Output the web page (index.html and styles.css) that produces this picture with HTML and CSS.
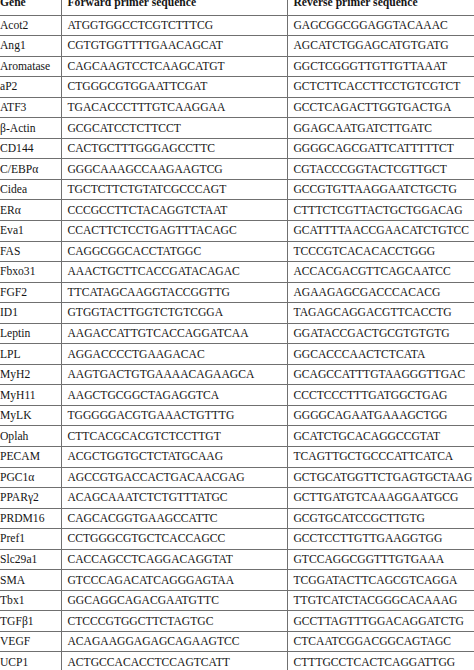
FILE: index.html
```html
<!DOCTYPE html>
<html>
<head>
<meta charset="utf-8">
<link rel="stylesheet" href="styles.css">
</head>
<body>
<table class="primers">
<thead>
<tr><th class="c-gene">Gene</th><th class="c-fwd">Forward primer sequence</th><th class="c-rev">Reverse primer sequence</th></tr>
</thead>
<tbody>
<tr><td>Acot2</td><td>ATGGTGGCCTCGTCTTTCG</td><td>GAGCGGCGGAGGTACAAAC</td></tr>
<tr><td>Ang1</td><td>CGTGTGGTTTTGAACAGCAT</td><td>AGCATCTGGAGCATGTGATG</td></tr>
<tr><td>Aromatase</td><td>CAGCAAGTCCTCAAGCATGT</td><td>GGCTCGGGTTGTTGTTAAAT</td></tr>
<tr><td>aP2</td><td>CTGGGCGTGGAATTCGAT</td><td>GCTCTTCACCTTCCTGTCGTCT</td></tr>
<tr><td>ATF3</td><td>TGACACCCTTTGTCAAGGAA</td><td>GCCTCAGACTTGGTGACTGA</td></tr>
<tr><td>β-Actin</td><td>GCGCATCCTCTTCCT</td><td>GGAGCAATGATCTTGATC</td></tr>
<tr><td>CD144</td><td>CACTGCTTTGGGAGCCTTC</td><td>GGGGCAGCGATTCATTTTTCT</td></tr>
<tr><td>C/EBPα</td><td>GGGCAAAGCCAAGAAGTCG</td><td>CGTACCCGGTACTCGTTGCT</td></tr>
<tr><td>Cidea</td><td>TGCTCTTCTGTATCGCCCAGT</td><td>GCCGTGTTAAGGAATCTGCTG</td></tr>
<tr><td>ERα</td><td>CCCGCCTTCTACAGGTCTAAT</td><td>CTTTCTCGTTACTGCTGGACAG</td></tr>
<tr><td>Eva1</td><td>CCACTTCTCCTGAGTTTACAGC</td><td>GCATTTTAACCGAACATCTGTCC</td></tr>
<tr><td>FAS</td><td>CAGGCGGCACCTATGGC</td><td>TCCCGTCACACACCTGGG</td></tr>
<tr><td>Fbxo31</td><td>AAACTGCTTCACCGATACAGAC</td><td>ACCACGACGTTCAGCAATCC</td></tr>
<tr><td>FGF2</td><td>TTCATAGCAAGGTACCGGTTG</td><td>AGAAGAGCGACCCACACG</td></tr>
<tr><td>ID1</td><td>GTGGTACTTGGTCTGTCGGA</td><td>TAGAGCAGGACGTTCACCTG</td></tr>
<tr><td>Leptin</td><td>AAGACCATTGTCACCAGGATCAA</td><td>GGATACCGACTGCGTGTGTG</td></tr>
<tr><td>LPL</td><td>AGGACCCCTGAAGACAC</td><td>GGCACCCAACTCTCATA</td></tr>
<tr><td>MyH2</td><td>AAGTGACTGTGAAAACAGAAGCA</td><td>GCAGCCATTTGTAAGGGTTGAC</td></tr>
<tr><td>MyH11</td><td>AAGCTGCGGCTAGAGGTCA</td><td>CCCTCCCTTTGATGGCTGAG</td></tr>
<tr><td>MyLK</td><td>TGGGGGACGTGAAACTGTTTG</td><td>GGGGCAGAATGAAAGCTGG</td></tr>
<tr><td>Oplah</td><td>CTTCACGCACGTCTCCTTGT</td><td>GCATCTGCACAGGCCGTAT</td></tr>
<tr><td>PECAM</td><td>ACGCTGGTGCTCTATGCAAG</td><td>TCAGTTGCTGCCCATTCATCA</td></tr>
<tr><td>PGC1α</td><td>AGCCGTGACCACTGACAACGAG</td><td>GCTGCATGGTTCTGAGTGCTAAG</td></tr>
<tr><td>PPARγ2</td><td>ACAGCAAATCTCTGTTTATGC</td><td>GCTTGATGTCAAAGGAATGCG</td></tr>
<tr><td>PRDM16</td><td>CAGCACGGTGAAGCCATTC</td><td>GCGTGCATCCGCTTGTG</td></tr>
<tr><td>Pref1</td><td>CCTGGGCGTGCTCACCAGCC</td><td>GCCTCCTTGTTGAAGGTGG</td></tr>
<tr><td>Slc29a1</td><td>CACCAGCCTCAGGACAGGTAT</td><td>GTCCAGGCGGTTTGTGAAA</td></tr>
<tr><td>SMA</td><td>GTCCCAGACATCAGGGAGTAA</td><td>TCGGATACTTCAGCGTCAGGA</td></tr>
<tr><td>Tbx1</td><td>GGCAGGCAGACGAATGTTC</td><td>TTGTCATCTACGGGCACAAAG</td></tr>
<tr><td>TGFβ1</td><td>CTCCCGTGGCTTCTAGTGC</td><td>GCCTTAGTTTGGACAGGATCTG</td></tr>
<tr><td>VEGF</td><td>ACAGAAGGAGAGCAGAAGTCC</td><td>CTCAATCGGACGGCAGTAGC</td></tr>
<tr><td>UCP1</td><td>ACTGCCACACCTCCAGTCATT</td><td>CTTTGCCTCACTCAGGATTGG</td></tr>
</tbody>
</table>
</body>
</html>
```
FILE: styles.css
```css
html, body {
  margin: 0;
  padding: 0;
  background: #fff;
  overflow: hidden;
}
body {
  width: 474px;
  height: 670px;
  overflow: hidden;
}
.primers {
  border-collapse: collapse;
  table-layout: fixed;
  width: 560px;
  margin-left: -1px;
  margin-top: -7.4px;
  font-family: "Liberation Serif", "Times New Roman", serif;
  font-size: 11.6px;
  color: #151515;
}
.primers th, .primers td {
  padding: 0 0 0 6px;
  text-align: left;
  white-space: nowrap;
  overflow: hidden;
  height: 20.56px;
  line-height: 19px;
  border-top: 1px solid #707070;
  border-bottom: 1px solid #707070;
  box-sizing: border-box;
}
.primers th {
  font-weight: bold;
  border-top: none;
  height: 22.4px;
  vertical-align: top;
}
.primers th:first-child, .primers td:first-child {
  padding-left: 1px;
}
.c-gene { width: 62px; }
.c-fwd { width: 226px; }
.c-rev { width: 272px; }
.primers th + th, .primers td + td {
  border-left: 1px solid #707070;
}
```
